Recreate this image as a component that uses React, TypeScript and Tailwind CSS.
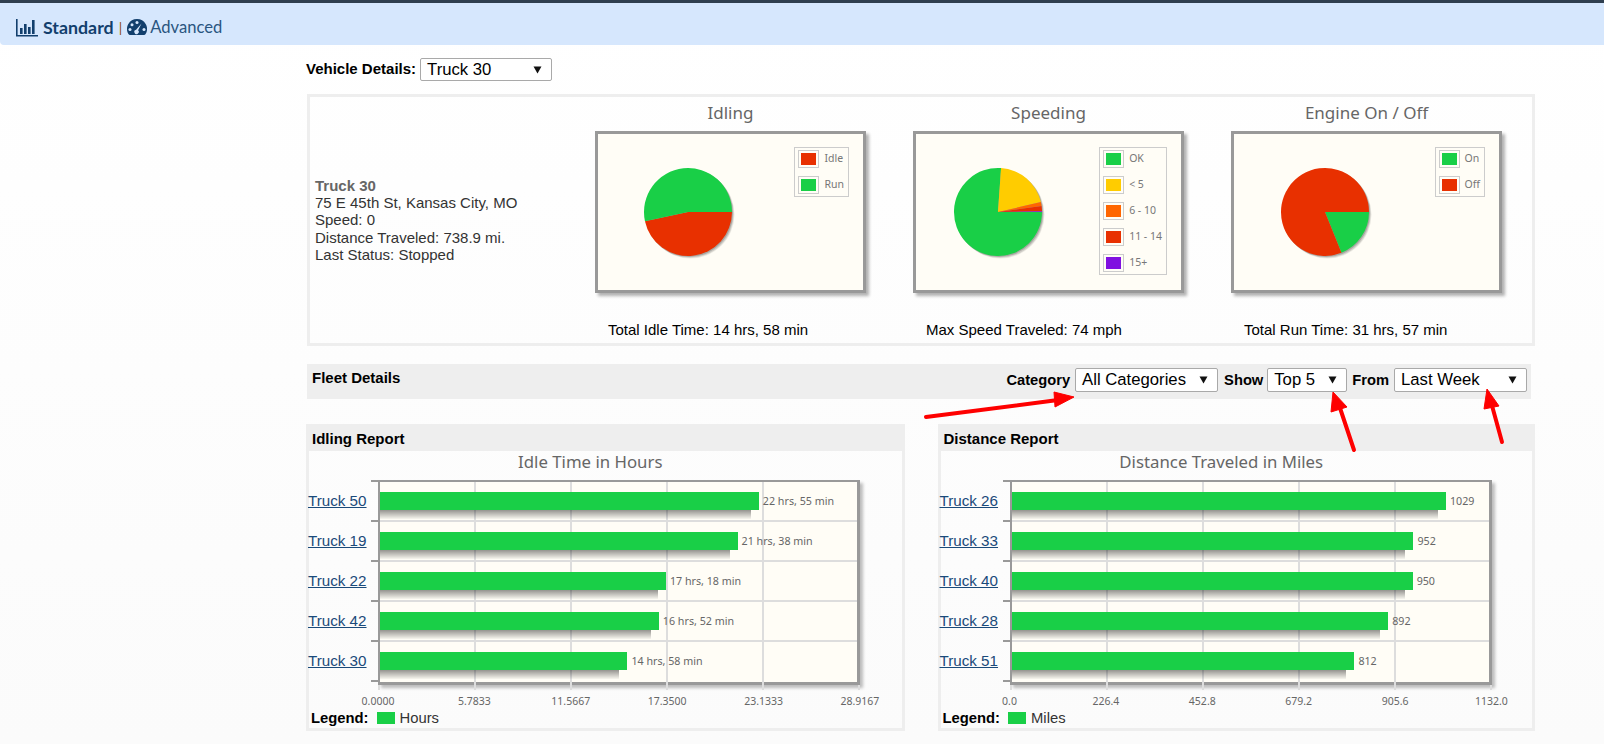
const cream = "bg-[#fffdf6]";

const GREEN = "#19cf47";
const RED = "#e83000";

type Slice = { color: string; end: number };

function slicePath(from: number, to: number, r: number) {
  const a = (from * Math.PI) / 180;
  const b = (to * Math.PI) / 180;
  const large = to - from > 180 ? 1 : 0;
  return `M50 50 L${50 + r * Math.cos(a)} ${50 + r * Math.sin(a)} A${r} ${r} 0 ${large} 1 ${50 + r * Math.cos(b)} ${50 + r * Math.sin(b)} Z`;
}

function Pie({ slices, left }: { slices: Slice[]; left: number }) {
  let start = 0;
  return (
    <svg className="absolute" width="100" height="100" viewBox="0 0 100 100" style={{ left: left - 50, top: 78 - 50 }}>
      <circle cx="52.5" cy="52.5" r="44" fill="#000" opacity="0.08" />
      <circle cx="51.8" cy="51.8" r="44" fill="#000" opacity="0.12" />
      <circle cx="51" cy="51" r="44" fill="#000" opacity="0.18" />
      {slices.map((s) => {
        const d = slicePath(start, s.end, 44);
        start = s.end;
        return <path key={s.color} d={d} fill={s.color} />;
      })}
    </svg>
  );
}

function PieCard(props: {
  title: string;
  footer: string;
  pieLeft: number;
  slices: Slice[];
  legend: { label: string; color: string }[];
}) {
  return (
    <div className="w-[271px] flex flex-col">
      <div className="h-[34px] shrink-0 text-center text-[17px] leading-[31px] text-[#666] font-['Noto_Sans',sans-serif]">{props.title}</div>
      <div className={`relative h-[162px] shrink-0 border-[3px] border-[#999] ${cream} shadow-[3px_3px_3px_rgba(0,0,0,0.3)]`}>
        <Pie slices={props.slices} left={props.pieLeft} />
        <div className="absolute right-[14px] top-[13px] border border-[#ccc] pl-[3px] pr-[4px] py-[2px] flex flex-col gap-[8px]">
          {props.legend.map((l) => (
            <div key={l.label} className="flex items-center gap-[5px]">
              <div className="border border-[#ccc] p-[2px]">
                <div className="w-[15px] h-[12px]" style={{ backgroundColor: l.color }} />
              </div>
              <span className="text-[10.5px] text-[#777] font-['Noto_Sans',sans-serif]">{l.label}</span>
            </div>
          ))}
        </div>
      </div>
      <div className="pl-[13px] pt-[28px] text-[15px] leading-[17px] text-black">{props.footer}</div>
    </div>
  );
}

function Caret() {
  return (
    <svg width="9" height="8" viewBox="0 0 9 8">
      <path d="M0.500 0.500H8.500L4.500 7.500Z" fill="#111" />
    </svg>
  );
}

function FakeSelect({ value, className }: { value: string; className: string }) {
  return (
    <div className={`flex items-center justify-between bg-white border border-[#a9a9a9] rounded-[2px] pl-[6px] pr-[9px] text-[16.700px] text-black font-normal ${className}`}>
      <span>{value}</span>
      <Caret />
    </div>
  );
}

type Row = { name: string; value: number; label: string };

function BarChart(props: { title: string; report: string; unit: string; rows: Row[]; ticks: string[]; max: number; className: string }) {
  return (
    <div className={`h-[307px] border-[3px] border-t-0 border-[#eee] flex flex-col ${props.className}`}>
      <div className="bg-[#eee] h-[27px] shrink-0 -mx-[3px] pl-[6px] pt-[6px] text-[15px] leading-[18px] font-bold text-black">{props.report}</div>
      <div className="text-center text-[16.800px] leading-[22px] pr-[30px] text-[#666] font-['Noto_Sans',sans-serif]">{props.title}</div>
      <div className="flex mt-[7px]">
        <div className="w-[69px] -ml-[1px] mr-[1px] pt-[1px] flex flex-col">
          {props.rows.map((r) => (
            <div key={r.name} className="h-[40px] flex items-center">
              <a className="text-[15.200px] text-[#1a4a7a] underline">{r.name}</a>
            </div>
          ))}
        </div>
        <div className="relative w-[482px]">
          <div className={`relative h-[205px] border-[3px] border-l-2 border-t-2 border-[#999] ${cream} shadow-[3px_3px_3px_rgba(0,0,0,0.25)]`}>
            <span className="absolute left-[-9px] top-[-2px] w-[7px] h-[2px] bg-[#999]" />
            {[1, 2, 3, 4].map((i) => (
              <div key={i} className="absolute top-0 bottom-[-8px] w-[2px] bg-[#ddd]" style={{ left: i * 96 - 2 }} />
            ))}
            <div className="absolute bottom-[-8px] right-[-3px] w-[2px] h-[5px] bg-[#ddd]" />
            <div className="absolute bottom-[-8px] left-[-2px] w-[2px] h-[5px] bg-[#ddd]" />
            {props.rows.map((r) => (
              <div key={r.name} className="relative h-[40px] flex items-center border-b-2 border-[#ddd] last:border-transparent">
                <div className="relative h-[18px] bg-[#19cf47]" style={{ width: (r.value / props.max) * 478 }}>
                  <div className="absolute left-0 right-[8px] top-[18px] h-[9px] bg-gradient-to-b from-[rgba(0,0,0,0.42)] to-[rgba(0,0,0,0.03)]" />
                </div>
                <span className="ml-[4px] text-[10.700px] text-[#666] font-['Noto_Sans',sans-serif]">{r.label}</span>
                <span className="absolute left-[-9px] bottom-[-2px] w-[7px] h-[2px] bg-[#999]" />
              </div>
            ))}
          </div>
          <div className="flex justify-between mt-[9px] -mx-[20px] w-[522px]">
            {props.ticks.map((t) => (
              <span key={t} className="w-[40px] text-center text-[10.500px] leading-[14px] text-[#666] font-['Noto_Sans',sans-serif]">{t}</span>
            ))}
          </div>
        </div>
      </div>
      <div className="flex items-center pl-[2px] text-[14.800px] leading-[20px]">
        <b className="text-black mr-[8px]">Legend:</b>
        <span className="w-[18px] h-[12px] bg-[#19cf47] mr-[5px]" />
        <span className="text-[#333]">{props.unit}</span>
      </div>
    </div>
  );
}

const idleRows: Row[] = [
  { name: "Truck 50", value: 22.92, label: "22 hrs, 55 min" },
  { name: "Truck 19", value: 21.63, label: "21 hrs, 38 min" },
  { name: "Truck 22", value: 17.3, label: "17 hrs, 18 min" },
  { name: "Truck 42", value: 16.87, label: "16 hrs, 52 min" },
  { name: "Truck 30", value: 14.97, label: "14 hrs, 58 min" },
];

const distRows: Row[] = [
  { name: "Truck 26", value: 1029, label: "1029" },
  { name: "Truck 33", value: 952, label: "952" },
  { name: "Truck 40", value: 950, label: "950" },
  { name: "Truck 28", value: 892, label: "892" },
  { name: "Truck 51", value: 812, label: "812" },
];

export default function App() {
  return (
    <div className="relative w-[1604px] h-[744px] overflow-hidden bg-gradient-to-b from-white to-[#fbfbfb] font-['Liberation_Sans',Arial,sans-serif]">
      {/* top nav */}
      <div className="border-t-[3px] border-[#2f3f4f]">
        <div className="h-[42px] bg-[#d6e7fd] rounded-bl-[4px] flex items-center pl-[16px] pt-[7px] font-['Lato',sans-serif] text-[#123f6d]">
          <svg width="22" height="18" viewBox="0 0 22 18" fill="#123f6d">
            <path d="M0 0h1.600v16H22v1.600H0z" />
            <rect x="4" y="9" width="2.600" height="6" />
            <rect x="8" y="5" width="2.600" height="10" />
            <rect x="12" y="8" width="2.600" height="7" />
            <rect x="16" y="1" width="2.600" height="14" />
          </svg>
          <span className="ml-[5px] text-[17.800px] font-bold">Standard</span>
          <span className="ml-[5px] mr-[5px] text-[14px] text-[#8a4a10]">|</span>
          <svg width="20" height="18" viewBox="0 0 20 18">
            <path d="M10 0a10 10 0 0 0-8.600 15.100c.3.600 1 .9 1.600.9h14c.7 0 1.300-.3 1.600-.9A10 10 0 0 0 10 0z" fill="#123f6d" />
            <circle cx="10" cy="3.500" r="1.500" fill="#d6e7fd" />
            <circle cx="5" cy="5.800" r="1.500" fill="#d6e7fd" />
            <circle cx="3" cy="10.500" r="1.500" fill="#d6e7fd" />
            <circle cx="17" cy="10.500" r="1.500" fill="#d6e7fd" />
            <path d="M14.500 4.500l-3.400 6.800a2.200 2.200 0 1 1-2-.6z" fill="#d6e7fd" />
          </svg>
          <span className="ml-[3px] text-[16.600px] font-normal text-[#2a5580]">Advanced</span>
        </div>
      </div>

      <div className="ml-[307px] w-[1228px]">
        {/* vehicle select */}
        <div className="flex items-center mt-[13px] h-[23px] -ml-[1px] text-[15px] font-bold text-black">
          <span className="mr-[4px]">Vehicle Details:</span>
          <FakeSelect value="Truck 30" className="w-[132px] h-[23px]" />
        </div>

        {/* vehicle summary */}
        <div className="mt-[13px] border-[3px] border-[#eee] flex items-stretch h-[252px]">
          <div className="w-[285px] pl-[5px] flex flex-col justify-center text-[15px] leading-[17.200px] text-[#333]">
            <b className="text-[#666]">Truck 30</b>
            <span>75 E 45th St, Kansas City, MO</span>
            <span>Speed: 0</span>
            <span>Distance Traveled: 738.9 mi.</span>
            <span>Last Status: Stopped</span>
          </div>
          <div className="flex gap-[47px]">
            <PieCard
              title="Idling"
              footer="Total Idle Time: 14 hrs, 58 min"
              pieLeft={90}
              slices={[
                { color: RED, end: 168 },
                { color: GREEN, end: 360 },
              ]}
              legend={[
                { label: "Idle", color: RED },
                { label: "Run", color: GREEN },
              ]}
            />
            <PieCard
              title="Speeding"
              footer="Max Speed Traveled: 74 mph"
              pieLeft={82}
              slices={[
                { color: GREEN, end: 274 },
                { color: "#ffcc00", end: 347 },
                { color: "#ff6600", end: 352 },
                { color: RED, end: 359 },
                { color: "#8010e0", end: 360 },
              ]}
              legend={[
                { label: "OK", color: GREEN },
                { label: "< 5", color: "#ffcc00" },
                { label: "6 - 10", color: "#ff6600" },
                { label: "11 - 14", color: RED },
                { label: "15+", color: "#8010e0" },
              ]}
            />
            <PieCard
              title="Engine On / Off"
              footer="Total Run Time: 31 hrs, 57 min"
              pieLeft={91}
              slices={[
                { color: GREEN, end: 68 },
                { color: RED, end: 360 },
              ]}
              legend={[
                { label: "On", color: GREEN },
                { label: "Off", color: RED },
              ]}
            />
          </div>
        </div>

        {/* fleet filter bar */}
        <div className="mt-[18px] w-[1224px] h-[35px] bg-[#eee] flex justify-between pl-[5px] pr-[4px] text-[14.700px] font-bold text-black">
          <div className="pt-[3px] text-[15px]">Fleet Details</div>
          <div className="flex items-center h-[30px] mt-[1px]">
            <span className="mr-[5px]">Category</span>
            <FakeSelect value="All Categories" className="w-[143px] h-[24px] mr-[6px]" />
            <span className="mr-[4px]">Show</span>
            <FakeSelect value="Top 5" className="w-[80px] h-[24px] mr-[5px]" />
            <span className="mr-[5px]">From</span>
            <FakeSelect value="Last Week" className="w-[133px] h-[24px]" />
          </div>
        </div>

        {/* reports */}
        <div className="mt-[25px] -ml-[1px] flex gap-[33px]">
          <BarChart className="w-[599px]" title="Idle Time in Hours" report="Idling Report" unit="Hours" rows={idleRows} max={28.9167} ticks={["0.0000", "5.7833", "11.5667", "17.3500", "23.1333", "28.9167"]} />
          <BarChart className="w-[598px]" title="Distance Traveled in Miles" report="Distance Report" unit="Miles" rows={distRows} max={1132} ticks={["0.0", "226.4", "452.8", "679.2", "905.6", "1132.0"]} />
        </div>
      </div>

      {/* red annotation arrows */}
      <svg className="absolute inset-0 pointer-events-none" width="1604" height="744" fill="#fe0000" stroke="#fe0000">
        <path d="M926 417L1058 400" strokeWidth="4" strokeLinecap="round" />
        <path d="M1074 397L1054 392L1055 407Z" />
        <path d="M1354 450L1339 405" strokeWidth="4" strokeLinecap="round" />
        <path d="M1333 392L1331 412L1347 407Z" />
        <path d="M1502 442L1491 402" strokeWidth="4" strokeLinecap="round" />
        <path d="M1487 389L1484 409L1499 406Z" />
      </svg>
    </div>
  );
}
